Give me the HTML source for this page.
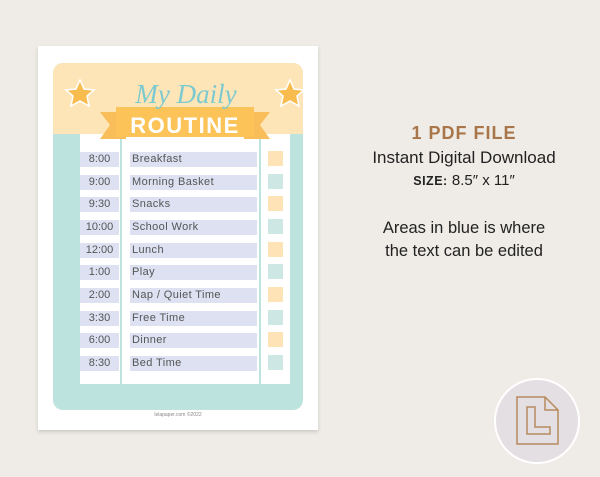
<!DOCTYPE html><html><head><style>
body{margin:0;width:600px;height:477px;background:#efece7;position:relative;overflow:hidden;font-family:"Liberation Sans",sans-serif}
.a{position:absolute}
.page{left:38px;top:46px;width:280px;height:384px;background:#fff;box-shadow:0 2px 4px rgba(0,0,0,.15)}
.tb{position:absolute;left:80px;width:39px;height:15px;background:#dde1f2;font-size:11px;color:#555;text-align:center;line-height:15px}
.ab{position:absolute;left:130px;width:127px;height:15px;background:#dde1f2;font-size:11px;color:#555;line-height:15px;padding-left:2px;box-sizing:border-box;letter-spacing:.4px}
.sq{position:absolute;left:268px;width:15px;height:15px}
.r{text-align:center;color:#222;width:260px;left:334px}
</style></head><body>
<div class="a page"></div>
<div class="a" style="left:53px;top:63px;width:250px;height:347px;border-radius:10px;background:#bde3df;overflow:hidden">
<div class="a" style="left:0;top:0;width:250px;height:71px;background:#fde5b8"></div></div>
<div class="a" style="left:80px;top:134px;width:210px;height:250px;background:#fff"></div>
<div class="a" style="left:120px;top:134px;width:2px;height:250px;background:#bde3df"></div>
<div class="a" style="left:259px;top:134px;width:2px;height:250px;background:#bde3df"></div>
<svg class="a" style="left:0;top:0" width="600" height="477">
<polygon points="100,112 126,112 126,139 100,139 110,125" fill="#f9be5a"/>
<polygon points="270,112 244,112 244,139 270,139 260,125" fill="#f9be5a"/>
<polygon points="116,107 254,107 254,137 116,137" fill="#fbc358"/>
<g fill="#f7bb4e" stroke="#fff" stroke-width="1.5">
<polygon points="80,80 84,89 94,90 87,96 89,106 80,101 71,106 73,96 66,90 76,89"/>
<polygon points="290,80 294,89 304,90 297,96 299,106 290,101 281,106 283,96 276,90 286,89"/>
</g>
<text x="186" y="103" text-anchor="middle" font-family="Liberation Serif" font-style="italic" font-size="27" fill="#7ccad0">My Daily</text>
<text x="185" y="133" text-anchor="middle" font-family="Liberation Sans" font-weight="bold" font-size="22" fill="#fff" letter-spacing="1.5">ROUTINE</text>
<circle cx="537" cy="421" r="42" fill="#e3dfe3" stroke="#fff" stroke-width="2"/>
<path d="M517,397 H545 L558,410 V444 H517 Z M545,397 V410 H558" fill="none" stroke="#b88a5c" stroke-width="1.5"/>
<path d="M527,407 H535 V427 H550 V434 H527 Z" fill="none" stroke="#b88a5c" stroke-width="1.5"/>
</svg>
<div class="tb" style="top:152px">8:00</div><div class="ab" style="top:152px">Breakfast</div><div class="sq" style="top:151px;background:#fde3b5"></div>
<div class="tb" style="top:175px">9:00</div><div class="ab" style="top:175px">Morning Basket</div><div class="sq" style="top:174px;background:#cde8e4"></div>
<div class="tb" style="top:197px">9:30</div><div class="ab" style="top:197px">Snacks</div><div class="sq" style="top:196px;background:#fde3b5"></div>
<div class="tb" style="top:220px">10:00</div><div class="ab" style="top:220px">School Work</div><div class="sq" style="top:219px;background:#cde8e4"></div>
<div class="tb" style="top:243px">12:00</div><div class="ab" style="top:243px">Lunch</div><div class="sq" style="top:242px;background:#fde3b5"></div>
<div class="tb" style="top:265px">1:00</div><div class="ab" style="top:265px">Play</div><div class="sq" style="top:264px;background:#cde8e4"></div>
<div class="tb" style="top:288px">2:00</div><div class="ab" style="top:288px">Nap / Quiet Time</div><div class="sq" style="top:287px;background:#fde3b5"></div>
<div class="tb" style="top:311px">3:30</div><div class="ab" style="top:311px">Free Time</div><div class="sq" style="top:310px;background:#cde8e4"></div>
<div class="tb" style="top:333px">6:00</div><div class="ab" style="top:333px">Dinner</div><div class="sq" style="top:332px;background:#fde3b5"></div>
<div class="tb" style="top:356px">8:30</div><div class="ab" style="top:356px">Bed Time</div><div class="sq" style="top:355px;background:#cde8e4"></div>
<div class="a" style="left:38px;width:280px;top:412px;text-align:center;font-size:5px;color:#888">lelapaper.com ©2022</div>
<div class="a r" style="top:123px;font-size:18px;font-weight:bold;color:#a8764a;letter-spacing:1px">1 PDF FILE</div>
<div class="a r" style="top:148px;font-size:17px">Instant Digital Download</div>
<div class="a r" style="top:172px;font-size:15px"><b style="font-size:12.5px;letter-spacing:.5px">SIZE:</b> 8.5″ x 11″</div>
<div class="a r" style="top:217px;font-size:16.5px;line-height:23px">Areas in blue is where<br>the text can be edited</div>
</body></html>
